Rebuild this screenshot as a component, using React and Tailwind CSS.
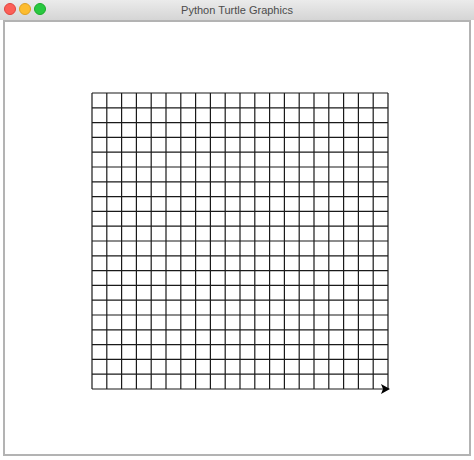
import React from "react";

export default function App() {
  const x0 = 87, y0 = 71, size = 296, n = 20;
  const step = size / n;
  const lines = [];
  for (let i = 0; i <= n; i++) {
    const p = i * step;
    lines.push(<line key={"v" + i} x1={x0 + p} y1={y0} x2={x0 + p} y2={y0 + size} />);
    lines.push(<line key={"h" + i} x1={x0} y1={y0 + p} x2={x0 + size} y2={y0 + p} />);
  }
  const tx = 385, ty = 367;
  return (
    <div className="w-[474px] h-[460px] bg-white flex flex-col overflow-hidden" style={{ fontFamily: '"Liberation Sans", Arial, sans-serif' }}>
      <div className="relative h-[20px] shrink-0 bg-gradient-to-b from-[#ebebeb] to-[#d5d5d5] flex items-center justify-center">
        <div className="absolute left-[4px] top-[3px] flex gap-[3px]">
          <span className="w-[12px] h-[12px] rounded-full bg-[#fc5f57] border border-[#e0443e]" />
          <span className="w-[12px] h-[12px] rounded-full bg-[#fdbc2e] border border-[#dea123]" />
          <span className="w-[12px] h-[12px] rounded-full bg-[#28c840] border border-[#1aab29]" />
        </div>
        <span className="text-[11px] text-[#4c4c4c] leading-none">Python Turtle Graphics</span>
      </div>
      <div className="ml-[3px] w-[468px] h-[436px] border-2 border-[#b3b3b3] bg-white">
        <svg width="464" height="432" className="block">
          <g stroke="#1a1a1a" strokeWidth="1.2" fill="none">{lines}</g>
          <polygon points={`${tx},${ty} ${tx - 9},${ty - 5} ${tx - 7},${ty} ${tx - 9},${ty + 5}`} fill="#000" />
        </svg>
      </div>
    </div>
  );
}
